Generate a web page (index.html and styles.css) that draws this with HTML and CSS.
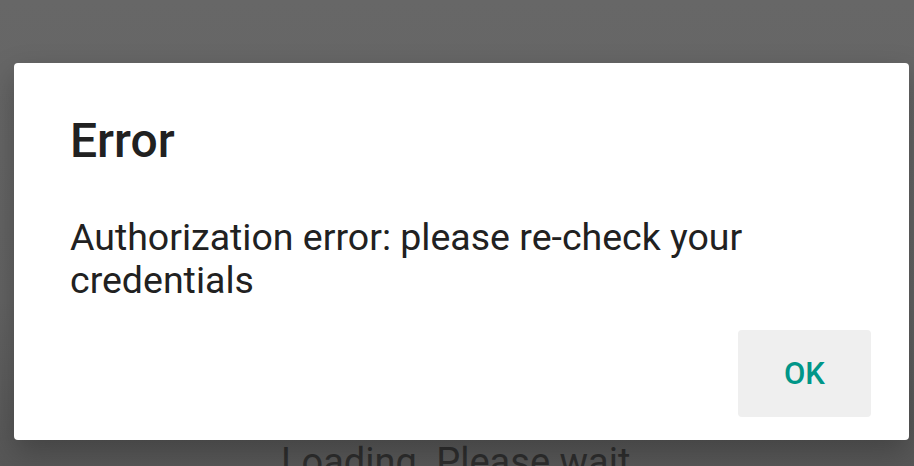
FILE: index.html
```html
<!DOCTYPE html>
<html>
<head>
<meta charset="utf-8">
<link rel="stylesheet" href="styles.css">
</head>
<body>
<div class="screen">
  <div class="app">
    <p class="loading">Loading. Please wait...</p>
  </div>
  <div class="dialog" role="dialog">
    <h1 class="title">Error</h1>
    <p class="message">Authorization error: please re-check your credentials</p>
    <div class="actions">
      <button class="btn">OK</button>
    </div>
  </div>
</div>
</body>
</html>
```
FILE: styles.css
```css
html, body {
  margin: 0;
  padding: 0;
  width: 914px;
  height: 466px;
  overflow: hidden;
  background: #666666;
  font-family: Roboto, "Noto Sans", sans-serif;
}
.screen {
  position: relative;
  width: 914px;
  height: 466px;
  background: linear-gradient(#676767 0px, #636363 300px, #575757 466px);
}
.app {
  display: flex;
  flex-direction: column;
  align-items: flex-start;
  padding-top: 438px;
  padding-left: 281px;
}
.loading {
  margin: 0;
  font-size: 38px;
  line-height: 48px;
  color: #2e2e2e;
  white-space: nowrap;
}
.dialog {
  position: absolute;
  left: 14px;
  top: 63px;
  width: 895px;
  height: 377px;
  box-sizing: border-box;
  background: #ffffff;
  border-radius: 4px;
  box-shadow: 0 12px 30px rgba(0,0,0,0.25);
  padding: 50px 56px 23px 56px;
  display: flex;
  flex-direction: column;
}
.title {
  margin: 0;
  font-size: 48px;
  font-weight: 500;
  line-height: 56px;
  color: #212121;
}
.message {
  margin: 47px 0 0 0;
  font-size: 37.5px;
  line-height: 43px;
  color: #212121;
}
.actions {
  margin-top: auto;
  display: flex;
  justify-content: flex-end;
  margin-right: -18px;
}
.btn {
  width: 133px;
  height: 87px;
  border: none;
  border-radius: 4px;
  background: #efefef;
  color: #009688;
  font-family: Roboto, "Noto Sans", sans-serif;
  font-size: 31px;
  font-weight: 500;
  padding: 0;
}
```
